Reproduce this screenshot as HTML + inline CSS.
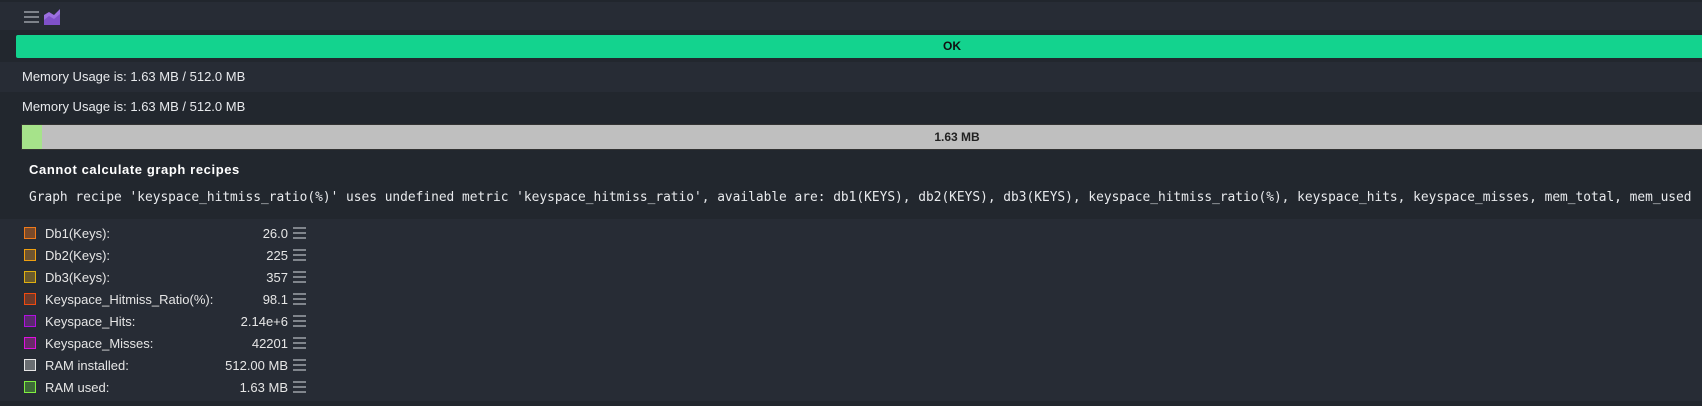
<!DOCTYPE html>
<html><head><style>
*{margin:0;padding:0;box-sizing:border-box}
body{width:1702px;height:406px;overflow:hidden;background:#272c35;font-family:"Liberation Sans",Arial,sans-serif;color:#e8eaed;font-size:13px;position:relative}
.abs{position:absolute}
.row{position:absolute;left:0;width:1702px}
.lg{position:absolute;left:0;height:22px;width:320px}
.lg .sq{position:absolute;left:24px;top:5px;width:12px;height:12px;border:1.5px solid}
.lg .l{position:absolute;left:45px;top:4px;font-size:13px;color:#e6e6e6}
.lg .v{position:absolute;right:32px;top:4px;font-size:13px;color:#e6e6e6;text-align:right}
.lg .m{position:absolute;left:293px;top:5px;width:13px}
.m i{display:block;height:2px;background:#80858c;margin-bottom:3px}
</style></head><body>
<div class="row" style="top:0;height:2px;background:#21262d"></div>
<div class="abs" style="left:24px;top:11px;width:15px"><div style="height:2px;background:#7d828a;margin-bottom:3px"></div><div style="height:2px;background:#7d828a;margin-bottom:3px"></div><div style="height:2px;background:#7d828a"></div></div>
<svg class="abs" style="left:44px;top:9px" width="17" height="16" viewBox="0 0 17 16"><path d="M0 6 L5 3 L10 6 L16 0 L16 16 L0 16Z" fill="#9b6fe0"/><path d="M0 11 L5 7 L10 10 L16 5 L16 16 L0 16Z" fill="#7f51c9"/></svg>
<div class="row" style="top:30px;height:32px;background:#22272e"></div>
<div class="abs" style="left:16px;top:35px;width:1872px;height:23px;background:#13d38e;border-radius:2px;text-align:center;font-weight:bold;color:#111;line-height:23px;font-size:12px">OK</div>
<div class="row" style="top:62px;height:30px;background:#272c35"></div>
<div class="abs" style="left:22px;top:69px">Memory Usage is: 1.63 MB / 512.0 MB</div>
<div class="row" style="top:92px;height:30px;background:#22272e"></div>
<div class="abs" style="left:22px;top:99px">Memory Usage is: 1.63 MB / 512.0 MB</div>
<div class="row" style="top:122px;height:30px;background:#22272e"></div>
<div class="abs" style="left:21px;top:124px;width:1872px;height:26px;background:#bfbfbf;border:1px solid #333;text-align:center;line-height:24px;font-weight:bold;color:#222;font-size:12px">1.63 MB</div>
<div class="abs" style="left:22px;top:125px;width:20px;height:24px;background:#a6e38a"></div>
<div class="row" style="top:152px;height:67px;background:#22272e"></div>
<div class="abs" style="left:29px;top:162px;font-weight:bold;font-size:13px;letter-spacing:0.6px;color:#fff">Cannot calculate graph recipes</div>
<div class="abs" style="left:29px;top:190px;font-family:'DejaVu Sans Mono','Liberation Mono',monospace;font-size:12.85px;white-space:nowrap;color:#e8eaed">Graph recipe 'keyspace_hitmiss_ratio(%)' uses undefined metric 'keyspace_hitmiss_ratio', available are: db1(KEYS), db2(KEYS), db3(KEYS), keyspace_hitmiss_ratio(%), keyspace_hits, keyspace_misses, mem_total, mem_used</div>
<div class="row" style="top:401px;height:5px;background:#22272e"></div>

<div class="lg" style="top:222px"><div class="sq" style="border-color:#f07a1a;background:#7a4a2a"></div><div class="l">Db1(Keys):</div><div class="v">26.0</div><div class="m"><i></i><i></i><i></i></div></div>
<div class="lg" style="top:244px"><div class="sq" style="border-color:#f0a010;background:#6e5430"></div><div class="l">Db2(Keys):</div><div class="v">225</div><div class="m"><i></i><i></i><i></i></div></div>
<div class="lg" style="top:266px"><div class="sq" style="border-color:#e0b010;background:#6a5a2c"></div><div class="l">Db3(Keys):</div><div class="v">357</div><div class="m"><i></i><i></i><i></i></div></div>
<div class="lg" style="top:288px"><div class="sq" style="border-color:#f04a10;background:#6e3a2a"></div><div class="l">Keyspace_Hitmiss_Ratio(%):</div><div class="v">98.1</div><div class="m"><i></i><i></i><i></i></div></div>
<div class="lg" style="top:310px"><div class="sq" style="border-color:#b010e0;background:#5a2a6e"></div><div class="l">Keyspace_Hits:</div><div class="v">2.14e+6</div><div class="m"><i></i><i></i><i></i></div></div>
<div class="lg" style="top:332px"><div class="sq" style="border-color:#e010e0;background:#6a2a6a"></div><div class="l">Keyspace_Misses:</div><div class="v">42201</div><div class="m"><i></i><i></i><i></i></div></div>
<div class="lg" style="top:354px"><div class="sq" style="border-color:#e6e6e6;background:#6a6e72"></div><div class="l">RAM installed:</div><div class="v">512.00 MB</div><div class="m"><i></i><i></i><i></i></div></div>
<div class="lg" style="top:376px"><div class="sq" style="border-color:#80f040;background:#3e6a38"></div><div class="l">RAM used:</div><div class="v">1.63 MB</div><div class="m"><i></i><i></i><i></i></div></div>
</body></html>
